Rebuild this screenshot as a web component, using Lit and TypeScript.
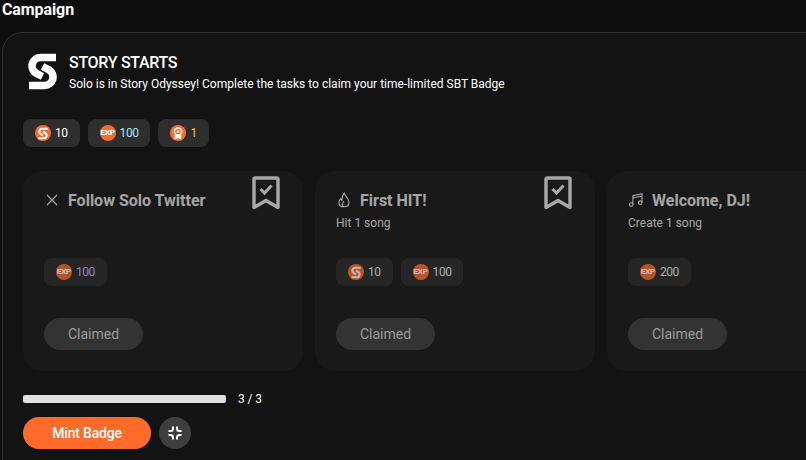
import { LitElement, html, css, svg } from "lit";
import { customElement } from "lit/decorators.js";

const sMark = (w: number) => svg`<path d="M28 4.500H12.500A8.500 8.500 0 0 0 8 20.200L14.500 23.500" fill="none" stroke="currentColor" stroke-width="${w}"/><path d="M1 32.500H16.500A8.500 8.500 0 0 0 21 16.800L14.500 13.500" fill="none" stroke="currentColor" stroke-width="${w}"/>`;

const solo = html`<span class="coin"><svg width="10" height="13" viewBox="0 0 29 37">${sMark(6)}</svg></span>`;
const exp = html`<span class="coin"><span class="exp">EXP</span></span>`;
const medal = html`<span class="coin"><svg width="12" height="13" viewBox="0 0 12 13"><circle cx="6" cy="4.500" r="3.600" fill="none" stroke="#fff" stroke-width="1.500"/><circle cx="6" cy="4.500" r="1.200" fill="#fff"/><path d="M2.800 7.500V12.500L6 11L9.200 12.500V7.500" fill="#fff"/></svg></span>`;

const xIcon = html`<svg class="ti" width="16" height="16" viewBox="0 0 16 16"><path d="M3 3L13 13M13 3L3 13" stroke="#e8e8e8" stroke-width="1.200" fill="none"/></svg>`;
const flame = html`<svg class="ti" width="16" height="16" viewBox="0 0 16 16"><path d="M8.200 1.200C8.600 4 13 6 13 10.200C13 13 10.900 14.800 8 14.800C5.100 14.800 3 13 3 10.400C3 8.800 3.700 7.600 4.700 6.700C4.900 7.700 5.400 8.300 6 8.500C5.800 6 6.600 3.200 8.200 1.200ZM8 14.600C6.800 14.300 6.200 13.400 6.200 12.400C6.200 11.200 7.300 10.500 8 9.400" stroke="#e8e8e8" stroke-width="1.100" fill="none"/></svg>`;
const music = html`<svg class="ti" width="16" height="16" viewBox="0 0 16 16"><path d="M4.900 12.500V3.700L14 1.600V10.500M4.900 6L14 4" stroke="#e8e8e8" stroke-width="1.100" fill="none"/><circle cx="3.200" cy="12.600" r="1.800" fill="none" stroke="#e8e8e8" stroke-width="1.100"/><circle cx="12.200" cy="10.700" r="1.800" fill="none" stroke="#e8e8e8" stroke-width="1.100"/></svg>`;

type Chip = { icon: unknown; value: string; tone: string };
type Task = { icon: unknown; title: string; sub?: string; chips: Chip[]; mark: boolean };

const tasks: Task[] = [
  { icon: xIcon, title: "Follow Solo Twitter", chips: [{ icon: exp, value: "100", tone: "lilac" }], mark: true },
  { icon: flame, title: "First HIT!", sub: "Hit 1 song", chips: [{ icon: solo, value: "10", tone: "plain" }, { icon: exp, value: "100", tone: "plain" }], mark: true },
  { icon: music, title: "Welcome, DJ!", sub: "Create 1 song", chips: [{ icon: exp, value: "200", tone: "plain" }], mark: false },
];

@customElement("app-root")
export class AppRoot extends LitElement {
  static styles = css`
    :host { display: block; width: 806px; height: 460px; overflow: hidden; background: #0e0e0e; color: #fff; font-family: "Roboto", "Liberation Sans", sans-serif; }
    .heading { height: 32px; padding: 1px 0 0 2px; font-size: 16px; line-height: 18px; font-weight: 700; box-sizing: border-box; letter-spacing: -0.1px; }
    .panel { margin-left: 2px; width: 900px; height: 460px; box-sizing: border-box; padding: 20px 0 0 20px; background: #131313; border: 1px solid #333; border-radius: 20px; }
    .head { display: flex; gap: 12px; align-items: flex-start; height: 66px; padding-left: 5px; }
    .logo { width: 29px; height: 37px; color: #fff; display: block; flex: none; }
    .title { font-size: 16px; line-height: 19px; font-weight: 500; letter-spacing: -0.3px; }
    .desc { font-size: 12px; line-height: 14px; margin-top: 5px; }
    .chips { display: flex; gap: 8px; }
    .chip { display: flex; align-items: center; gap: 4px; height: 28px; box-sizing: border-box; padding: 0 12px; border-radius: 8px; background: #2e2e2e; font-size: 12px; letter-spacing: -0.45px; }
    .coin { width: 16px; height: 16px; border-radius: 50%; background: #ff6b2b; display: flex; align-items: center; justify-content: center; color: #fff; flex: none; }
    .exp { font-size: 8px; font-weight: 900; line-height: 16px; letter-spacing: -0.2px; }
    .white { color: #fff; } .blue { color: #a8e4ff; } .gold { color: #ffb43a; }
    .plain { color: #e8e8e8; } .lilac { color: #c9b4ff; }
    .cards { display: flex; gap: 12px; margin-top: 24px; }
    .card { position: relative; flex: none; width: 280px; height: 200px; box-sizing: border-box; padding: 21px 21px 0; background: #191919; border-radius: 20px; }
    .dim { opacity: 0.7; display: flex; flex-direction: column; height: 100%; }
    .t { display: flex; align-items: center; gap: 8px; height: 16px; font-size: 16px; font-weight: 700; color: #e0e0e0; }
    .ti { display: block; flex: none; }
    .sub { font-size: 12px; line-height: 14px; margin-top: 8px; height: 14px; color: #e0e0e0; }
    .card .chips { margin-top: 28px; }
    .card .chip { background: #2c2c2c; }
    .claimed { margin-top: 32px; width: 99px; height: 32px; border-radius: 16px; background: #3e3e3e; color: #d0d0d0; font-size: 14px; display: flex; align-items: center; justify-content: center; }
    .mark { position: absolute; top: 5px; right: 23px; opacity: 0.72; }
    .progress { display: flex; align-items: center; gap: 12px; margin-top: 24px; height: 8px; }
    .track { width: 203px; height: 8px; background: #e0e0e0; border-radius: 2px; }
    .count { font-size: 12px; letter-spacing: -0.1px; }
    .actions { display: flex; gap: 8px; margin-top: 14px; }
    .mint { width: 128px; height: 32px; border: 0; padding: 0; border-radius: 16px; background: #ff6b2b; color: #fff; font: 500 14px "Roboto", "Liberation Sans", sans-serif; letter-spacing: -0.2px; }
    .fold { width: 32px; height: 32px; border: 0; padding: 0; border-radius: 50%; background: #3e3e3e; display: flex; align-items: center; justify-content: center; }
  `;

  render() {
    return html`
      <div class="heading">Campaign</div>
      <section class="panel">
        <div class="head">
          <svg class="logo" viewBox="0 0 29 37">${sMark(7.5)}</svg>
          <div>
            <div class="title">STORY STARTS</div>
            <div class="desc">Solo is in Story Odyssey! Complete the tasks to claim your time-limited SBT Badge</div>
          </div>
        </div>
        <div class="chips">
          <div class="chip">${solo}<span class="white">10</span></div>
          <div class="chip">${exp}<span class="blue">100</span></div>
          <div class="chip">${medal}<span class="gold">1</span></div>
        </div>
        <div class="cards">
          ${tasks.map((t) => html`
            <article class="card">
              <div class="dim">
                <div class="t">${t.icon}<span>${t.title}</span></div>
                <div class="sub">${t.sub ?? ""}</div>
                <div class="chips">${t.chips.map((c) => html`<div class="chip">${c.icon}<span class=${c.tone}>${c.value}</span></div>`)}</div>
                <div class="claimed">Claimed</div>
              </div>
              ${t.mark ? html`<svg class="mark" width="28" height="34" viewBox="0 0 28 34"><path d="M2 3.500A1.500 1.500 0 0 1 3.500 2H24.500A1.500 1.500 0 0 1 26 3.500V31.500L14 24.500L2 31.500Z" fill="none" stroke="#e0e0e0" stroke-width="3.400" stroke-linejoin="round"/><path d="M8.500 13L12.500 17L19.500 9.500" fill="none" stroke="#e0e0e0" stroke-width="3"/></svg>` : ""}
            </article>`)}
        </div>
        <div class="progress"><div class="track"></div><span class="count">3 / 3</span></div>
        <div class="actions">
          <button class="mint">Mint Badge</button>
          <button class="fold"><svg width="16" height="16" viewBox="0 0 16 16"><path d="M6 1.500V3.500A2.500 2.500 0 0 1 3.500 6H1.500M10 1.500V3.500A2.500 2.500 0 0 0 12.500 6H14.500M6 14.500V12.500A2.500 2.500 0 0 0 3.500 10H1.500M10 14.500V12.500A2.500 2.500 0 0 1 12.500 10H14.500" fill="none" stroke="#fff" stroke-width="2"/></svg></button>
        </div>
      </section>
    `;
  }
}
